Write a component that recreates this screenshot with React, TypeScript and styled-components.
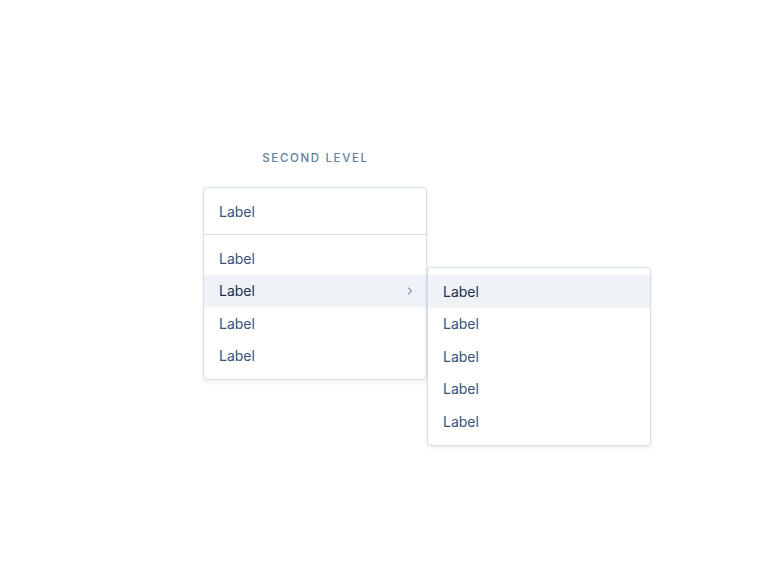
import styled, { createGlobalStyle } from 'styled-components';

const GlobalStyle = createGlobalStyle`
    html, body {
        margin: 0;
        padding: 0;
        background: #ffffff;
    }
    body {
        font-family: Inter, "Noto Sans", sans-serif;
        -webkit-font-smoothing: antialiased;
    }
`;

const mainItems = ['Label', 'Label', 'Label', 'Label'];
const subItems = ['Label', 'Label', 'Label', 'Label', 'Label'];

const Chevron = () => (
    <svg width="8" height="8" viewBox="0 0 8 8" fill="none">
        <path d="M2.5 1L5.5 4L2.5 7" stroke="#8a9ab2" strokeWidth="1.2" strokeLinecap="round" strokeLinejoin="round" />
    </svg>
);

const App = () => {
    return (
        <>
            <GlobalStyle />
            <Page>
                <Column>
                    <Heading>Second level</Heading>
                    <Menu>
                        <TopItem>Label</TopItem>
                        <Divider />
                        <Group>
                            {mainItems.map((label, i) => (
                                <Item key={i} $active={i === 1}>
                                    {label}
                                    {i === 1 && <Chevron />}
                                </Item>
                            ))}
                        </Group>
                    </Menu>
                </Column>
                <SubMenu>
                    <Group>
                        {subItems.map((label, i) => (
                            <Item key={i} $active={i === 0}>{label}</Item>
                        ))}
                    </Group>
                </SubMenu>
            </Page>
        </>
    );
};

const Page = styled.div`
    width: 768px;
    height: 576px;
    box-sizing: border-box;
    padding: 150px 0 0 203px;

    display: flex;
    flex-direction: row;
    align-items: flex-start;
`;

const Column = styled.div`
    width: 224px;
    display: flex;
    flex-direction: column;
    align-items: stretch;
`;

const Heading = styled.div`
    height: 16px;
    line-height: 16px;
    margin-bottom: 21px;
    padding-left: 1px;
    text-align: center;
    text-transform: uppercase;
    font-size: 11.5px;
    font-weight: 500;
    letter-spacing: 1.65px;
    color: #62809f;
`;

const Menu = styled.div`
    box-sizing: border-box;
    width: 224px;
    background: #ffffff;
    border: 1px solid #d6deea;
    border-radius: 4px;
    box-shadow: 0 2px 4px rgba(30, 50, 90, 0.08);
    overflow: hidden;
`;

const SubMenu = styled(Menu)`
    margin-top: 117px;
    position: relative;
    z-index: 1;
`;

const TopItem = styled.div`
    height: 46px;
    padding: 0 15px;
    display: flex;
    align-items: center;
    font-size: 14px;
    color: #37527a;
`;

const Divider = styled.div`
    height: 1px;
    background: #d6deea;
`;

const Group = styled.div`
    padding: 7px 0 7px;
`;

const Item = styled.div<{ $active?: boolean }>`
    height: 32.5px;
    padding: 0 12px 0 15px;
    display: flex;
    align-items: center;
    justify-content: space-between;
    font-size: 14px;
    color: ${(p) => (p.$active ? '#1c2f4c' : '#37527a')};
    background: ${(p) => (p.$active ? '#eff2f7' : 'transparent')};
`;

export default App;
